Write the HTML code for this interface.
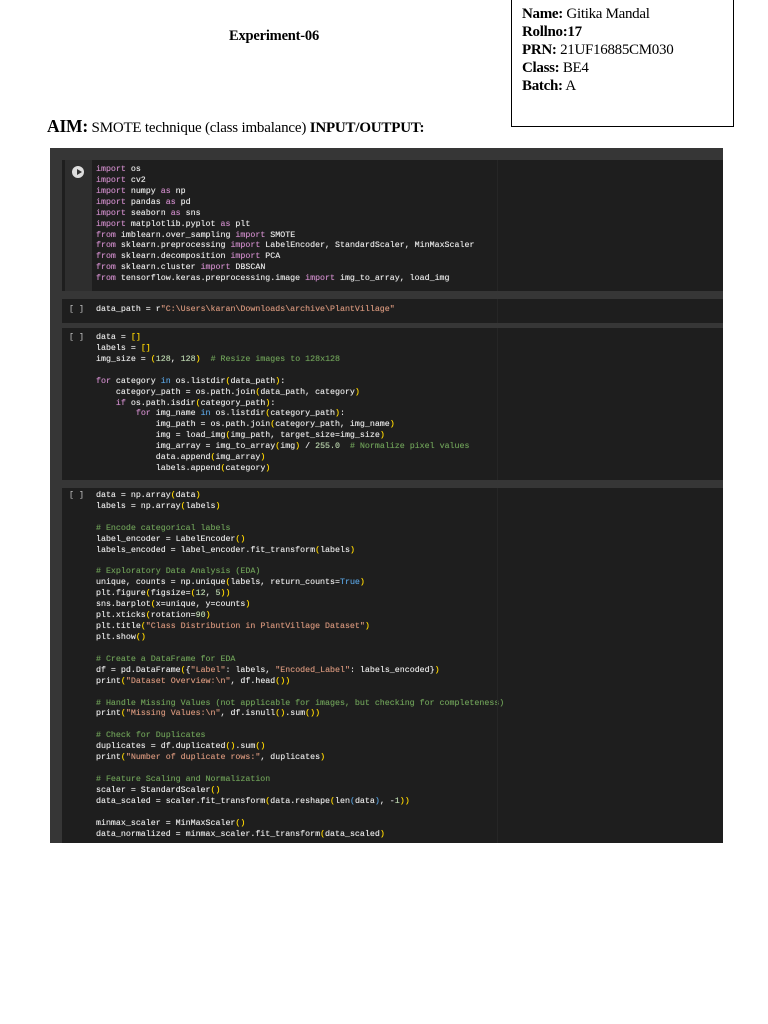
<!DOCTYPE html>
<html><head><meta charset="utf-8"><style>
body{margin:0;width:768px;height:1024px;background:#fff;position:relative;overflow:hidden;font-family:"Liberation Serif",serif;}
.abs{position:absolute}
#box{left:511px;top:0;width:221px;height:126px;border:1.5px solid #000;border-top:none}
#box div{position:absolute;left:10px;font-size:15px;color:#000;white-space:nowrap;letter-spacing:-0.3px}
#panel{left:50px;top:148px;width:673px;height:695px;background:#363636}
.cell{position:absolute;left:12px;width:661px;background:#1e1e1e}
.cell:after{content:"";position:absolute;left:435px;top:0;bottom:0;width:1px;background:#262626}
pre{margin:0;position:absolute;left:34px;font-family:"Liberation Mono",monospace;font-size:8.3px;line-height:10.92px;color:#e2e2e2;text-shadow:0 0 0.4px currentColor}
.k{color:#c586c0}.s{color:#ce9178}.c{color:#6a9955}.b{color:#ffd700}.n{color:#b5cea8}.t{color:#569cd6}
.g{position:absolute;left:7px;font-family:"Liberation Mono",monospace;font-size:8.3px;color:#ccc}
</style></head><body>
<div class="abs" style="left:229px;top:28px;font-size:14.5px;font-weight:bold;letter-spacing:-0.2px">Experiment-06</div>
<div id="box" class="abs">
<div style="top:6px"><b>Name:</b> Gitika Mandal</div>
<div style="top:24px"><b>Rollno:17</b></div>
<div style="top:42px"><b>PRN:</b> 21UF16885CM030</div>
<div style="top:60px"><b>Class:</b> BE4</div>
<div style="top:78px"><b>Batch:</b> A</div>
</div>
<div class="abs" style="left:47px;top:116px;font-size:15px;white-space:nowrap;letter-spacing:-0.2px"><b style="font-size:17.5px">AIM:</b> SMOTE technique (class imbalance) <b>INPUT/OUTPUT:</b></div>

<div id="panel" class="abs">
 <div class="cell" style="top:12px;height:131px">
  <div style="position:absolute;left:3px;top:0;width:27px;height:131px;background:#2e2e2e"></div>
  <div style="position:absolute;left:10px;top:6px;width:12px;height:12px;border-radius:50%;background:#ddd"></div>
  <div style="position:absolute;left:15px;top:9px;width:0;height:0;border-left:5px solid #333;border-top:3px solid transparent;border-bottom:3px solid transparent"></div>
<pre style="top:5px"><span class="k">import</span> os
<span class="k">import</span> cv2
<span class="k">import</span> numpy <span class="k">as</span> np
<span class="k">import</span> pandas <span class="k">as</span> pd
<span class="k">import</span> seaborn <span class="k">as</span> sns
<span class="k">import</span> matplotlib.pyplot <span class="k">as</span> plt
<span class="k">from</span> imblearn.over_sampling <span class="k">import</span> SMOTE
<span class="k">from</span> sklearn.preprocessing <span class="k">import</span> LabelEncoder, StandardScaler, MinMaxScaler
<span class="k">from</span> sklearn.decomposition <span class="k">import</span> PCA
<span class="k">from</span> sklearn.cluster <span class="k">import</span> DBSCAN
<span class="k">from</span> tensorflow.keras.preprocessing.image <span class="k">import</span> img_to_array, load_img</pre>
 </div>
 <div class="cell" style="top:151px;height:24px">
  <div class="g" style="top:6px">[ ]</div>
<pre style="top:6px">data_path = r<span class="s">"C:\Users\karan\Downloads\archive\PlantVillage"</span></pre>
 </div>
 <div class="cell" style="top:180px;height:152px">
  <div class="g" style="top:5px">[ ]</div>
<pre style="top:5px">data = <span class="b">[]</span>
labels = <span class="b">[]</span>
img_size = <span class="b">(</span><span class="n">128</span>, <span class="n">128</span><span class="b">)</span>  <span class="c"># Resize images to 128x128</span>

<span class="k">for</span> category <span class="t">in</span> os.listdir<span class="b">(</span>data_path<span class="b">)</span>:
    category_path = os.path.join<span class="b">(</span>data_path, category<span class="b">)</span>
    <span class="k">if</span> os.path.isdir<span class="b">(</span>category_path<span class="b">)</span>:
        <span class="k">for</span> img_name <span class="t">in</span> os.listdir<span class="b">(</span>category_path<span class="b">)</span>:
            img_path = os.path.join<span class="b">(</span>category_path, img_name<span class="b">)</span>
            img = load_img<span class="b">(</span>img_path, target_size=img_size<span class="b">)</span>
            img_array = img_to_array<span class="b">(</span>img<span class="b">)</span> / <span class="n">255.0</span>  <span class="c"># Normalize pixel values</span>
            data.append<span class="b">(</span>img_array<span class="b">)</span>
            labels.append<span class="b">(</span>category<span class="b">)</span></pre>
 </div>
 <div class="cell" style="top:340px;height:355px">
  <div class="g" style="top:3px">[ ]</div>
<pre style="top:3px">data = np.array<span class="b">(</span>data<span class="b">)</span>
labels = np.array<span class="b">(</span>labels<span class="b">)</span>

<span class="c"># Encode categorical labels</span>
label_encoder = LabelEncoder<span class="b">()</span>
labels_encoded = label_encoder.fit_transform<span class="b">(</span>labels<span class="b">)</span>

<span class="c"># Exploratory Data Analysis (EDA)</span>
unique, counts = np.unique<span class="b">(</span>labels, return_counts=<span class="t">True</span><span class="b">)</span>
plt.figure<span class="b">(</span>figsize=<span class="b">(</span><span class="n">12</span>, <span class="n">5</span><span class="b">))</span>
sns.barplot<span class="b">(</span>x=unique, y=counts<span class="b">)</span>
plt.xticks<span class="b">(</span>rotation=<span class="n">90</span><span class="b">)</span>
plt.title<span class="b">(</span><span class="s">"Class Distribution in PlantVillage Dataset"</span><span class="b">)</span>
plt.show<span class="b">()</span>

<span class="c"># Create a DataFrame for EDA</span>
df = pd.DataFrame<span class="b">(</span>{<span class="s">"Label"</span>: labels, <span class="s">"Encoded_Label"</span>: labels_encoded}<span class="b">)</span>
print<span class="b">(</span><span class="s">"Dataset Overview:\n"</span>, df.head<span class="b">())</span>

<span class="c"># Handle Missing Values (not applicable for images, but checking for completeness)</span>
print<span class="b">(</span><span class="s">"Missing Values:\n"</span>, df.isnull<span class="b">()</span>.sum<span class="b">())</span>

<span class="c"># Check for Duplicates</span>
duplicates = df.duplicated<span class="b">()</span>.sum<span class="b">()</span>
print<span class="b">(</span><span class="s">"Number of duplicate rows:"</span>, duplicates<span class="b">)</span>

<span class="c"># Feature Scaling and Normalization</span>
scaler = StandardScaler<span class="b">()</span>
data_scaled = scaler.fit_transform<span class="b">(</span>data.reshape<span class="b">(</span>len<span class="t">(</span>data<span class="t">)</span>, -<span class="n">1</span><span class="b">))</span>

minmax_scaler = MinMaxScaler<span class="b">()</span>
data_normalized = minmax_scaler.fit_transform<span class="b">(</span>data_scaled<span class="b">)</span></pre>
 </div>
</div>
</body></html>
